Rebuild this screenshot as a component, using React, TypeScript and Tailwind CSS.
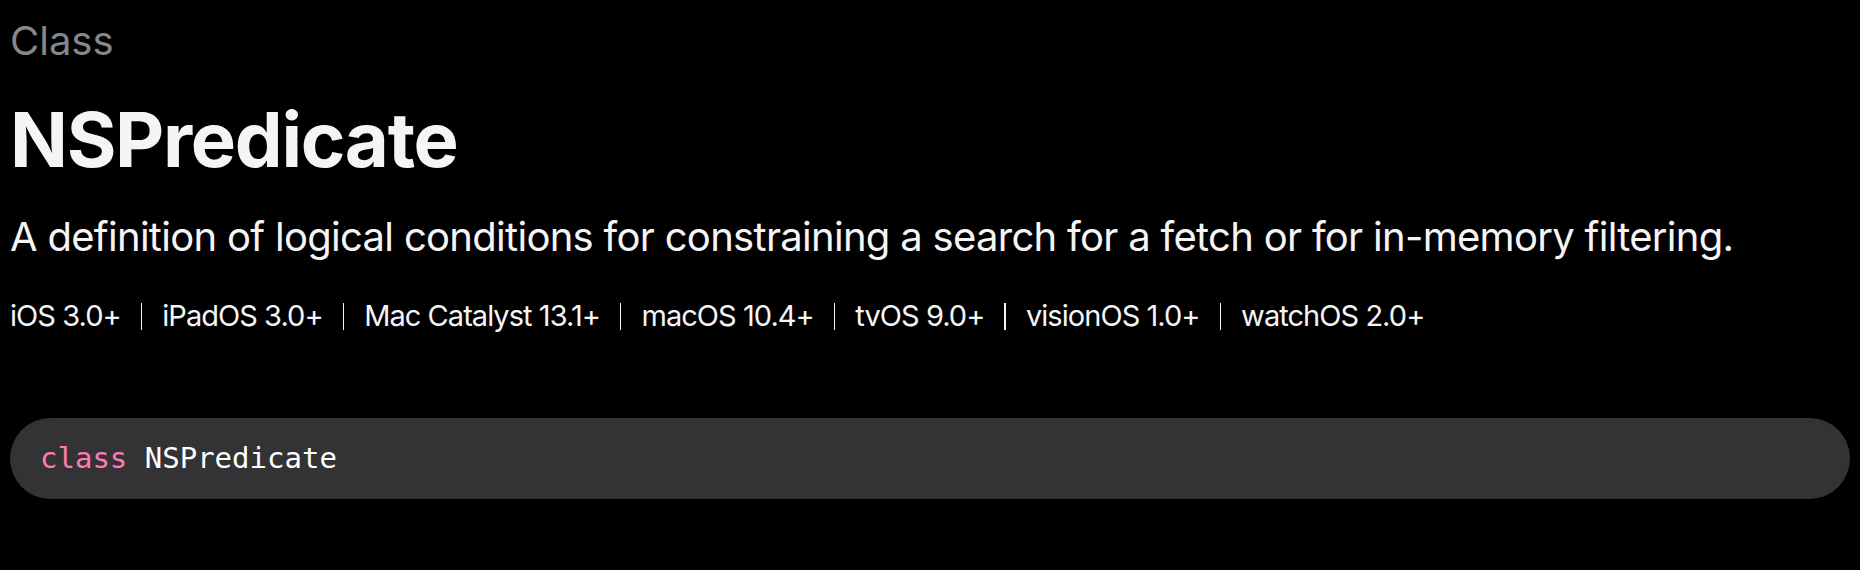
const platforms = [
  "iOS 3.0+",
  "iPadOS 3.0+",
  "Mac Catalyst 13.1+",
  "macOS 10.4+",
  "tvOS 9.0+",
  "visionOS 1.0+",
  "watchOS 2.0+",
];

export default function App() {
  return (
    <div className="min-h-screen bg-black px-[10px] pt-[17px] text-[#f5f5f7] font-['Inter','Noto_Sans',sans-serif]">
      <p className="text-[40px] leading-[48px] text-[#86868b]">Class</p>
      <h1 className="mt-[32px] text-[76px] leading-[84px] font-bold tracking-[-1.3px]">NSPredicate</h1>
      <p className="mt-[32px] text-[40px] leading-[48px] tracking-[-0.7px]">
        A definition of logical conditions for constraining a search for a fetch or for in-memory filtering.
      </p>
      <ul className="mt-[37px] flex items-center text-[29px] leading-[36px] tracking-[-0.95px]">
        {platforms.map((p, i) => (
          <li key={p} className="flex items-center">
            {i > 0 && <span className="mx-[20px] h-[27px] w-[1.5px] shrink-0 bg-[#f5f5f7]" />}
            <span>{p}</span>
          </li>
        ))}
      </ul>
      <div className="mt-[84px] flex h-[81px] items-center rounded-full bg-[#333336] pl-[30px]">
        <code className="text-[29px] font-['DejaVu_Sans_Mono',monospace]">
          <span className="text-[#ff7ab2]">class</span> <span className="text-white">NSPredicate</span>
        </code>
      </div>
    </div>
  );
}
